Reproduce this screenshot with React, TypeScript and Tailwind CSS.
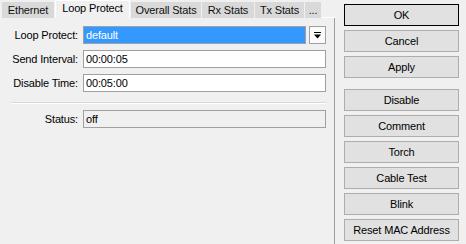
export default function App() {
  const tabs = ["Ethernet", "Loop Protect", "Overall Stats", "Rx Stats", "Tx Stats", "..."];
  const widths = ["w-[52px]", "w-[75px]", "w-[70px]", "w-[52px]", "w-[49px]", "w-[16px]"];
  const buttons = ["Disable", "Comment", "Torch", "Cable Test", "Blink", "Reset MAC Address"];

  return (
    <div
      className="w-[466px] h-[244px] bg-[#f0f0f0] flex text-[11px] text-black overflow-hidden tracking-[-0.15px]"
      style={{ fontFamily: '"Liberation Sans", Arial, sans-serif' }}
    >
      {/* left: tabs + form */}
      <div className="w-[335px] flex flex-col">
        <div className="flex items-end h-[18px] pl-[2px] gap-px">
          {tabs.map((t, i) =>
            i === 1 ? (
              <div key={t} className={`${widths[i]} h-[18px] bg-[#f0f0f0] border-t border-l border-r border-white flex items-start justify-center pt-[1px] leading-[13px]`}>
                {t}
              </div>
            ) : (
              <div key={t} className={`${widths[i]} h-[16px] bg-[#d9d9d9] flex items-start justify-center pt-[2px] leading-[13px] text-[#111]`}>
                {t}
              </div>
            )
          )}
          <div className="flex-1 border-b border-white" />
        </div>

        <div className="flex-1 border-r border-[#a0a0a0] pt-[8px] pr-[8px]">
          <div className="flex flex-col gap-[6px]">
            <div className="flex items-center h-[18px]">
              <div className="w-[79px] text-right pr-px">Loop Protect:</div>
              <div className="ml-[4px] w-[223px] h-[18px] border border-[#a0a0a0] bg-[#3399ff] text-white pl-[2px] leading-[16px]">
                default
              </div>
              <div className="ml-[3px] w-[17px] h-[18px] border border-[#a0a0a0] bg-[#fbfbfb] flex items-center justify-center">
                <svg width="9" height="9" viewBox="0 0 9 9">
                  <rect x="1" y="1" width="7" height="1" fill="#000" />
                  <path d="M1 3.5 L8 3.5 L4.5 7.5 Z" fill="#000" />
                </svg>
              </div>
            </div>
            <div className="flex items-center h-[18px]">
              <div className="w-[79px] text-right pr-px">Send Interval:</div>
              <div className="ml-[4px] flex-1 h-[18px] border border-[#a0a0a0] bg-white pl-[2px] leading-[16px]">00:00:05</div>
            </div>
            <div className="flex items-center h-[18px]">
              <div className="w-[79px] text-right pr-px">Disable Time:</div>
              <div className="ml-[4px] flex-1 h-[18px] border border-[#a0a0a0] bg-white pl-[2px] leading-[16px]">00:05:00</div>
            </div>
          </div>

          <div className="ml-[11px] mt-[10px] border-t border-[#d8d8d8] border-b border-b-white" />

          <div className="flex items-center h-[18px] mt-[6px]">
            <div className="w-[79px] text-right pr-px">Status:</div>
            <div className="ml-[4px] flex-1 h-[18px] border border-[#a0a0a0] bg-[#f0f0f0] pl-[2px] leading-[16px]">off</div>
          </div>
        </div>
      </div>

      {/* right: buttons */}
      <div className="ml-[9px] w-[115px] pt-[4px] flex flex-col">
        <div className="flex flex-col gap-[4px]">
          <div className="h-[22px] border border-black bg-[#e1e1e1] flex items-center justify-center">OK</div>
          <div className="h-[22px] border border-[#adadad] bg-[#e1e1e1] flex items-center justify-center">Cancel</div>
          <div className="h-[22px] border border-[#adadad] bg-[#e1e1e1] flex items-center justify-center">Apply</div>
        </div>
        <div className="flex flex-col gap-[4px] mt-[11px]">
          {buttons.map((b) => (
            <div key={b} className="h-[22px] border border-[#adadad] bg-[#e1e1e1] flex items-center justify-center whitespace-nowrap">
              {b}
            </div>
          ))}
        </div>
      </div>
    </div>
  );
}
